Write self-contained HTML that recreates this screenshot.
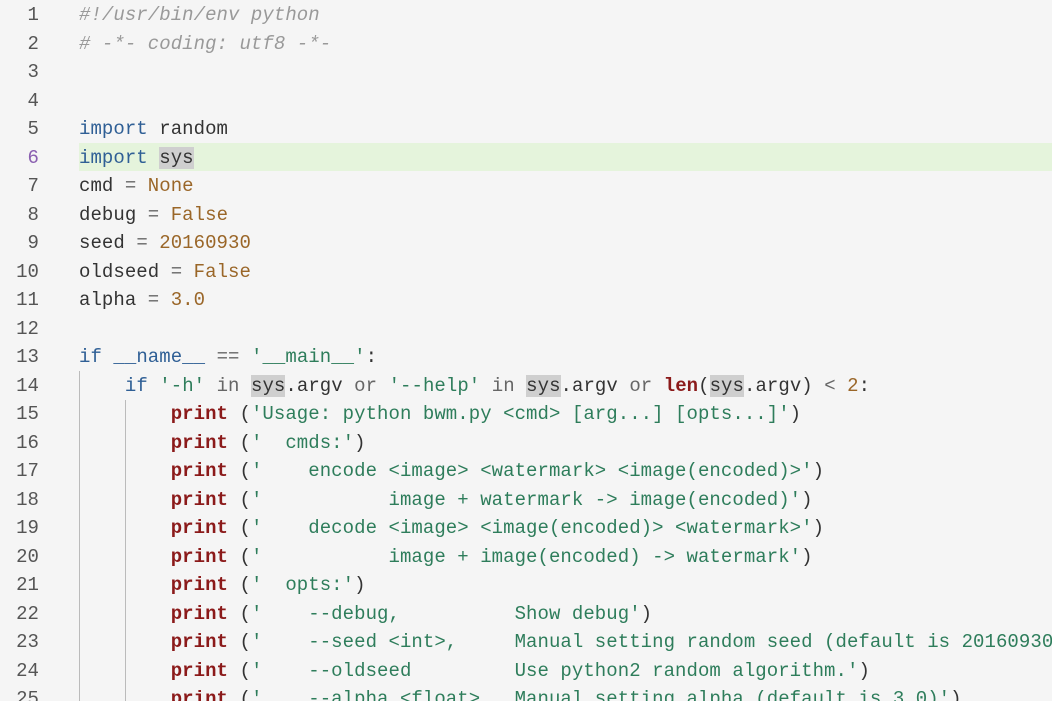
<!DOCTYPE html>
<html><head><meta charset="utf-8"><style>
html,body{margin:0;background:#f5f5f5;width:1052px;height:701px;overflow:hidden;}
body{position:relative;font-family:"Liberation Mono",monospace;font-size:19px;letter-spacing:0.06px}
.l{position:absolute;left:0;height:28.52px;line-height:30px;white-space:pre;width:1052px}
.n{position:absolute;left:0;width:39px;text-align:right;color:#555}
.c{position:absolute;left:79px;color:#333}
.k{color:#2f5f95}.s{color:#2e7d5b}.p{color:#8b1a1a;font-weight:bold}.m{color:#9a6628}.o{color:#666}.cm{color:#999;font-style:italic}
.h{background:#cfcfcf}
.g{position:absolute;width:1px;background:#bbb}
</style></head><body>
<div class="l" style="top:0px"><span class="n">1</span><span class="c cm">#!/usr/bin/env python</span></div>
<div class="l" style="top:28.52px"><span class="n">2</span><span class="c cm"># -*- coding: utf8 -*-</span></div>
<div class="l" style="top:57.04px"><span class="n">3</span></div>
<div class="l" style="top:85.56px"><span class="n">4</span></div>
<div class="l" style="top:114.08px"><span class="n">5</span><span class="c"><span class="k">import</span> random</span></div>
<div class="l" style="top:142.6px;background:linear-gradient(to right,transparent 79px,#e5f4dc 79px)"><span class="n" style="color:#8a5fb0">6</span><span class="c"><span class="k">import</span> <span class="h">sys</span></span></div>
<div class="l" style="top:171.12px"><span class="n">7</span><span class="c">cmd <span class="o">=</span> <span class="m">None</span></span></div>
<div class="l" style="top:199.64px"><span class="n">8</span><span class="c">debug <span class="o">=</span> <span class="m">False</span></span></div>
<div class="l" style="top:228.16px"><span class="n">9</span><span class="c">seed <span class="o">=</span> <span class="m">20160930</span></span></div>
<div class="l" style="top:256.68px"><span class="n">10</span><span class="c">oldseed <span class="o">=</span> <span class="m">False</span></span></div>
<div class="l" style="top:285.2px"><span class="n">11</span><span class="c">alpha <span class="o">=</span> <span class="m">3.0</span></span></div>
<div class="l" style="top:313.72px"><span class="n">12</span></div>
<div class="l" style="top:342.24px"><span class="n">13</span><span class="c"><span class="k">if</span> <span class="k">__name__</span> <span class="o">==</span> <span class="s">'__main__'</span>:</span></div>
<div class="l" style="top:370.76px"><span class="n">14</span><span class="c">    <span class="k">if</span> <span class="s">'-h'</span> <span class="o">in</span> <span class="h">sys</span>.argv <span class="o">or</span> <span class="s">'--help'</span> <span class="o">in</span> <span class="h">sys</span>.argv <span class="o">or</span> <span class="p">len</span>(<span class="h">sys</span>.argv) <span class="o">&lt;</span> <span class="m">2</span>:</span></div>
<div class="l" style="top:399.28px"><span class="n">15</span><span class="c">        <span class="p">print</span> (<span class="s">'Usage: python bwm.py &lt;cmd&gt; [arg...] [opts...]'</span>)</span></div>
<div class="l" style="top:427.8px"><span class="n">16</span><span class="c">        <span class="p">print</span> (<span class="s">'  cmds:'</span>)</span></div>
<div class="l" style="top:456.32px"><span class="n">17</span><span class="c">        <span class="p">print</span> (<span class="s">'    encode &lt;image&gt; &lt;watermark&gt; &lt;image(encoded)&gt;'</span>)</span></div>
<div class="l" style="top:484.84px"><span class="n">18</span><span class="c">        <span class="p">print</span> (<span class="s">'           image + watermark -&gt; image(encoded)'</span>)</span></div>
<div class="l" style="top:513.36px"><span class="n">19</span><span class="c">        <span class="p">print</span> (<span class="s">'    decode &lt;image&gt; &lt;image(encoded)&gt; &lt;watermark&gt;'</span>)</span></div>
<div class="l" style="top:541.88px"><span class="n">20</span><span class="c">        <span class="p">print</span> (<span class="s">'           image + image(encoded) -&gt; watermark'</span>)</span></div>
<div class="l" style="top:570.4px"><span class="n">21</span><span class="c">        <span class="p">print</span> (<span class="s">'  opts:'</span>)</span></div>
<div class="l" style="top:598.92px"><span class="n">22</span><span class="c">        <span class="p">print</span> (<span class="s">'    --debug,          Show debug'</span>)</span></div>
<div class="l" style="top:627.44px"><span class="n">23</span><span class="c">        <span class="p">print</span> (<span class="s">'    --seed &lt;int&gt;,     Manual setting random seed (default is 20160930)'</span>)</span></div>
<div class="l" style="top:655.96px"><span class="n">24</span><span class="c">        <span class="p">print</span> (<span class="s">'    --oldseed         Use python2 random algorithm.'</span>)</span></div>
<div class="l" style="top:684.48px"><span class="n">25</span><span class="c">        <span class="p">print</span> (<span class="s">'    --alpha &lt;float&gt;   Manual setting alpha (default is 3.0)'</span>)</span></div>
<div class="g" style="left:79px;top:371px;height:330px"></div>
<div class="g" style="left:125px;top:400px;height:301px"></div>
</body></html>
